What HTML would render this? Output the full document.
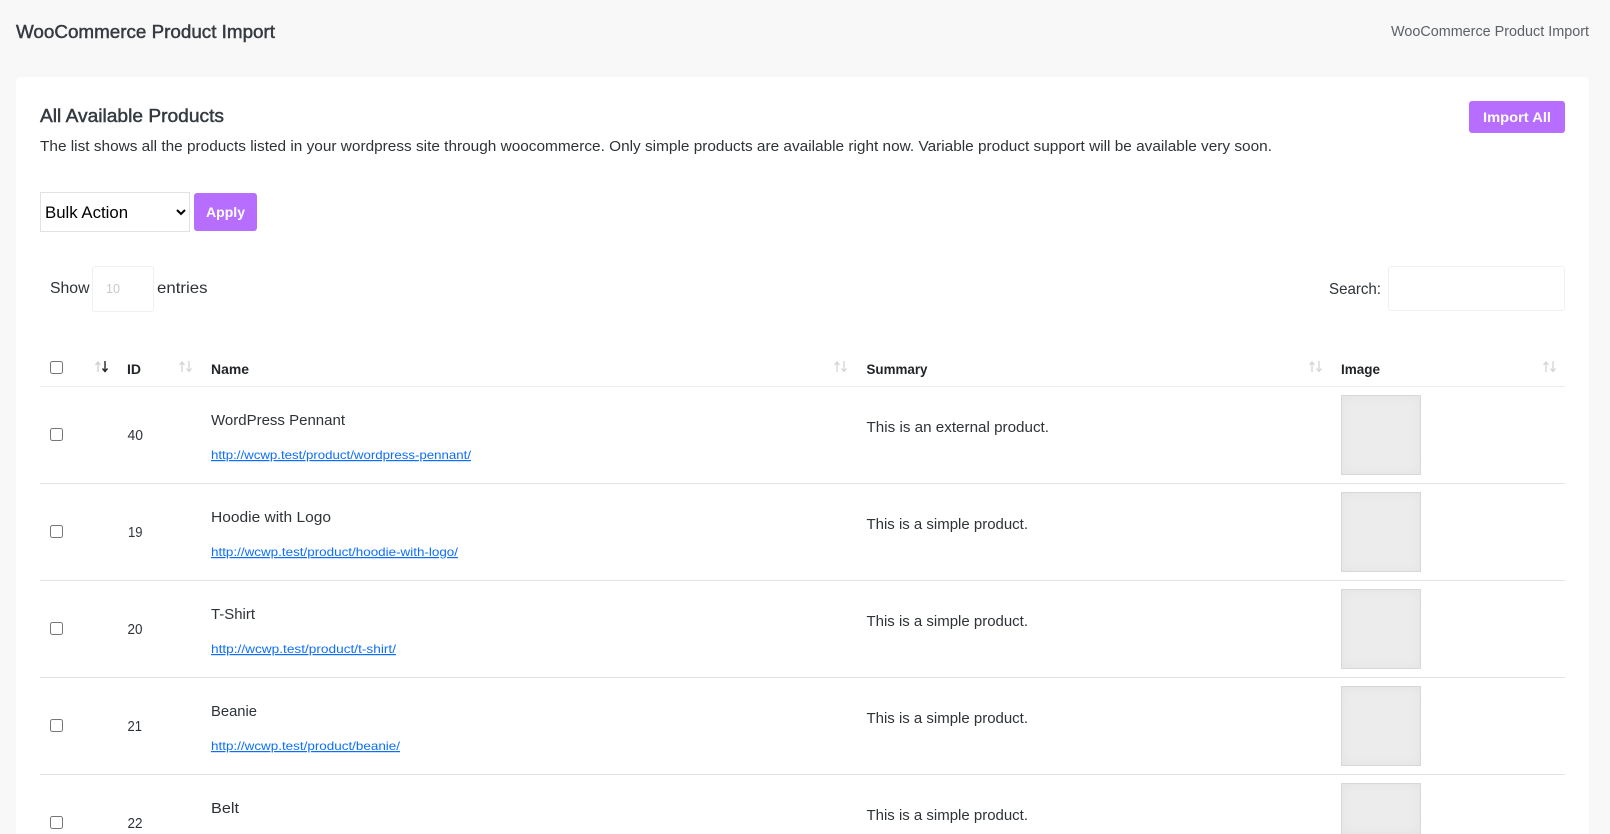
<!DOCTYPE html>
<html lang="en"><head><meta charset="utf-8"><title>WooCommerce Product Import</title>
<style>
html,body{margin:0;padding:0;width:1610px;height:834px;overflow:hidden;background:#f8f8f9}
body{position:relative;font-family:"Liberation Sans",sans-serif}
.card{position:absolute;left:16px;top:77px;width:1573px;height:757px;background:#fff;border-radius:5px 5px 0 0}
svg{position:absolute;left:0;top:0;pointer-events:none;display:block}
text{font-family:"Liberation Sans",sans-serif;font-size:15px;fill:#2e3338}
.m{stroke:#343a40;stroke-width:.45px;fill:#343a40}
.b{font-weight:bold;fill:#212529;font-size:14px}
.l{font-size:12px;fill:#0d6efd}
.w{font-weight:bold;fill:#fff;font-size:14px}
.btn{position:absolute;background:#b76eff;border-radius:3px}
select{position:absolute;left:40px;top:192px;width:150px;height:40px;box-sizing:border-box;border:1px solid #e2e2e2;background:#fff;color:#000;font:16.8px "Liberation Sans",sans-serif;padding:0;border-radius:0;margin:0;outline:0}
.inp{position:absolute;box-sizing:border-box;border:1px solid #f0f0f2;border-radius:3px;background:#fff}
input[type=checkbox]{position:absolute;left:50px;width:13px;height:13px;margin:0}
.img{position:absolute;left:1341px;width:80px;height:80px;box-sizing:border-box;background:#ececec;border:1px solid #d8d8d8;box-shadow:inset 0 0 10px #e2e2e2}
.ln{position:absolute;left:40px;width:1525px;height:1px;background:#e2e2e2}
</style></head><body>
<div class="card"></div>
<div class="btn" style="left:1469px;top:101px;width:96px;height:32px"></div>
<select><option>Bulk Action</option></select>
<div class="btn" style="left:194px;top:193px;width:63px;height:38px"></div>
<div class="inp" style="left:92px;top:266px;width:62px;height:46px"></div>
<div class="inp" style="left:1388px;top:266px;width:177px;height:45px"></div>

<input type="checkbox" style="top:361px">
<input type="checkbox" style="top:428px">
<input type="checkbox" style="top:525px">
<input type="checkbox" style="top:622px">
<input type="checkbox" style="top:719px">
<input type="checkbox" style="top:816px">

<div class="ln" style="top:386px;background:#ebebf0"></div>
<div class="ln" style="top:483px"></div>
<div class="ln" style="top:580px"></div>
<div class="ln" style="top:677px"></div>
<div class="ln" style="top:774px"></div>

<div class="img" style="top:395px"></div>
<div class="img" style="top:492px"></div>
<div class="img" style="top:589px"></div>
<div class="img" style="top:686px"></div>
<div class="img" style="top:783px;height:51px;border-bottom:0"></div>

<svg width="1610" height="834" viewBox="0 0 1610 834" xmlns="http://www.w3.org/2000/svg">
<text class="m" x="16" y="38" style="font-size:18px" textLength="259" lengthAdjust="spacingAndGlyphs">WooCommerce Product Import</text>
<text x="1391" y="36" style="fill:#5c6167;font-size:14.5px" textLength="198" lengthAdjust="spacingAndGlyphs">WooCommerce Product Import</text>
<text class="m" x="40" y="122" style="font-size:18px" textLength="184" lengthAdjust="spacingAndGlyphs">All Available Products</text>
<text x="40" y="151" textLength="1232" lengthAdjust="spacingAndGlyphs">The list shows all the products listed in your wordpress site through woocommerce. Only simple products are available right now. Variable product support will be available very soon.</text>
<text class="w" x="1483" y="122" textLength="68" lengthAdjust="spacingAndGlyphs">Import All</text>
<text class="w" x="206" y="217" textLength="39" lengthAdjust="spacingAndGlyphs">Apply</text>
<text x="50" y="293" style="font-size:16px" textLength="39.5" lengthAdjust="spacingAndGlyphs">Show</text>
<text x="106" y="293" style="font-size:12.5px;fill:#c8c8c8" textLength="14" lengthAdjust="spacingAndGlyphs">10</text>
<text x="157" y="293" style="font-size:16px" textLength="50.5" lengthAdjust="spacingAndGlyphs">entries</text>
<text x="1329" y="294" style="font-size:16px" textLength="52" lengthAdjust="spacingAndGlyphs">Search:</text>

<text class="b" x="127" y="374" textLength="14" lengthAdjust="spacingAndGlyphs">ID</text>
<text class="b" x="211" y="374" textLength="38" lengthAdjust="spacingAndGlyphs">Name</text>
<text class="b" x="866.5" y="374" textLength="61" lengthAdjust="spacingAndGlyphs">Summary</text>
<text class="b" x="1341" y="374" textLength="39" lengthAdjust="spacingAndGlyphs">Image</text>

<defs>
<g id="s" fill="none" stroke-width="1.3">
<path d="M3 372V362.5M.5 365L3 362L5.500 365" stroke="#d4d4d4"/>
<path d="M10 361V371M7.500 368.500L10 371.500L12.500 368.500" stroke="#d4d4d4"/>
</g>
</defs>
<g fill="none" stroke-width="1.4">
<path d="M98 372V362.500M95.500 365L98 362L100.500 365" stroke="#d2d2d2"/>
<path d="M105 361V371M102.500 368.500L105 371.500L107.500 368.500" stroke="#25282c"/>
</g>
<use href="#s" x="179"/><use href="#s" x="834"/><use href="#s" x="1309"/><use href="#s" x="1543"/>

<text x="127.500" y="440" style="font-size:14.500px" textLength="15.500" lengthAdjust="spacingAndGlyphs">40</text>
<text x="211" y="425" textLength="134" lengthAdjust="spacingAndGlyphs">WordPress Pennant</text>
<text class="l" x="211" y="459" text-decoration="underline" textLength="260" lengthAdjust="spacingAndGlyphs">http://wcwp.test/product/wordpress-pennant/</text>
<text x="866.500" y="432" textLength="182.500" lengthAdjust="spacingAndGlyphs">This is an external product.</text>

<text x="128" y="537" style="font-size:14.500px" textLength="14.500" lengthAdjust="spacingAndGlyphs">19</text>
<text x="211" y="522" textLength="120" lengthAdjust="spacingAndGlyphs">Hoodie with Logo</text>
<text class="l" x="211" y="556" text-decoration="underline" textLength="247" lengthAdjust="spacingAndGlyphs">http://wcwp.test/product/hoodie-with-logo/</text>
<text x="866.500" y="529" textLength="161.500" lengthAdjust="spacingAndGlyphs">This is a simple product.</text>

<text x="127.500" y="634" style="font-size:14.500px" textLength="15" lengthAdjust="spacingAndGlyphs">20</text>
<text x="211" y="619" textLength="44" lengthAdjust="spacingAndGlyphs">T-Shirt</text>
<text class="l" x="211" y="653" text-decoration="underline" textLength="185" lengthAdjust="spacingAndGlyphs">http://wcwp.test/product/t-shirt/</text>
<text x="866.500" y="626" textLength="161.500" lengthAdjust="spacingAndGlyphs">This is a simple product.</text>

<text x="127.500" y="731" style="font-size:14.500px" textLength="14.500" lengthAdjust="spacingAndGlyphs">21</text>
<text x="211" y="716" textLength="46" lengthAdjust="spacingAndGlyphs">Beanie</text>
<text class="l" x="211" y="750" text-decoration="underline" textLength="189" lengthAdjust="spacingAndGlyphs">http://wcwp.test/product/beanie/</text>
<text x="866.500" y="723" textLength="161.500" lengthAdjust="spacingAndGlyphs">This is a simple product.</text>

<text x="127.500" y="828" style="font-size:14.500px" textLength="15" lengthAdjust="spacingAndGlyphs">22</text>
<text x="211" y="813" textLength="28" lengthAdjust="spacingAndGlyphs">Belt</text>
<text x="866.500" y="820" textLength="161.500" lengthAdjust="spacingAndGlyphs">This is a simple product.</text>
</svg>
</body></html>
